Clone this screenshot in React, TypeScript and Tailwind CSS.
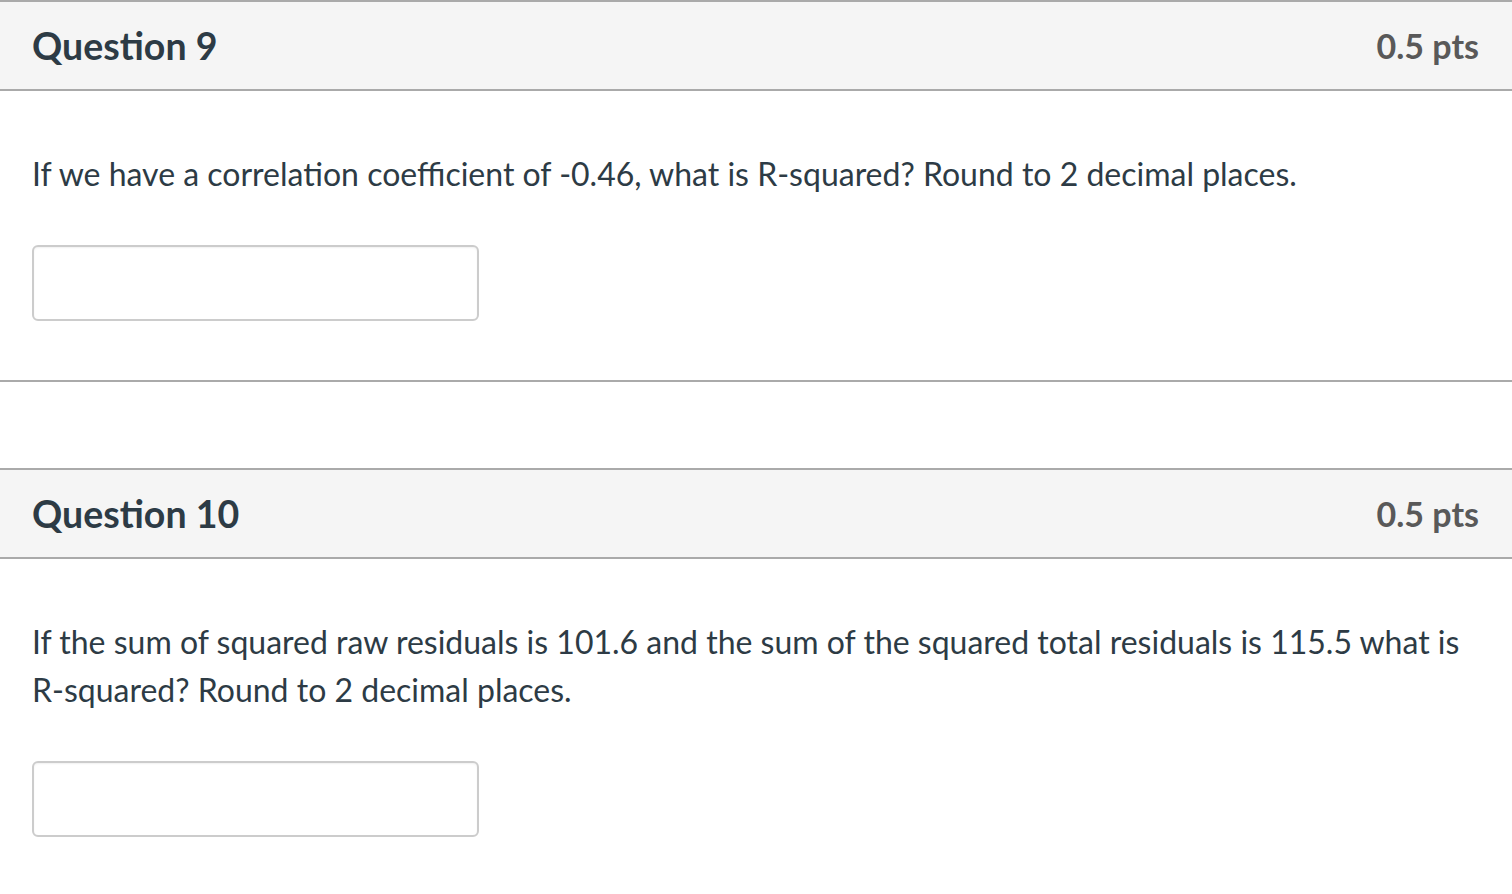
const questions = [
  {
    title: "Question 9",
    points: "0.5 pts",
    text: "If we have a correlation coefficient of -0.46, what is R-squared? Round to 2 decimal places.",
  },
  {
    title: "Question 10",
    points: "0.5 pts",
    text: "If the sum of squared raw residuals is 101.6 and the sum of the squared total residuals is 115.5 what is R-squared? Round to 2 decimal places.",
  },
];

function QuestionCard({ title, points, text }: { title: string; points: string; text: string }) {
  return (
    <div className="border-b-2 border-[#aaaaaa] bg-white">
      <div className="flex h-[91px] items-center justify-between border-y-2 border-[#aaaaaa] bg-[#f5f5f5] pl-[32px] pr-[33px]">
        <h2 className="text-[37.5px] font-bold leading-none text-[#2d3b45]">{title}</h2>
        <span className="text-[34px] font-bold leading-none text-[#595959]">{points}</span>
      </div>
      <div className="px-[32px] pb-[59px] pt-[59px]">
        <p className="text-[32px] leading-[48px] text-[#2d3b45]">{text}</p>
        <input
          type="text"
          aria-label={`${title} answer`}
          className="mt-[47px] block h-[76px] w-[447px] rounded-[6px] border-2 border-[#cccccc] bg-white shadow-[inset_0_1px_2px_rgba(0,0,0,0.06)] outline-none"
        />
      </div>
    </div>
  );
}

export default function App() {
  return (
    <div className="min-h-screen bg-white" style={{ fontFamily: "Lato, 'Liberation Sans', sans-serif" }}>
      <div className="flex flex-col gap-[86px]">
        {questions.map((q) => (
          <QuestionCard key={q.title} {...q} />
        ))}
      </div>
    </div>
  );
}
